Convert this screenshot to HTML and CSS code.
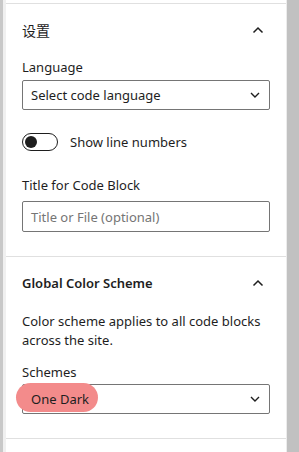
FILE: index.html
```html
<!DOCTYPE html>
<html lang="en">
<head>
    <meta charset="UTF-8">
    <title>Code Block Settings</title>
    <link rel="stylesheet" href="styles.css">
</head>
<body>
<div class="frame">
    <div class="edge"></div>
    <div class="sidebar">
        <div class="panel">
            <div class="panel-header">
                <span class="panel-title cjk">设置</span>
                <svg class="chevron" width="12" height="8" viewBox="0 0 12 8"><path d="M1.5 6.5 L6 2 L10.5 6.5" fill="none" stroke="#1e1e1e" stroke-width="1.5"/></svg>
            </div>
            <div class="panel-body">
                <div class="field-label">Language</div>
                <div class="select">
                    <span>Select code language</span>
                    <svg width="10" height="6" viewBox="0 0 10 6"><path d="M1 1 L5 5 L9 1" fill="none" stroke="#1e1e1e" stroke-width="1.4"/></svg>
                </div>

                <div class="toggle-row">
                    <span class="toggle"><span class="knob"></span></span>
                    <span>Show line numbers</span>
                </div>

                <div class="field-label title-label">Title for Code Block</div>
                <div class="input">Title or File (optional)</div>
            </div>
        </div>

        <div class="panel">
            <div class="panel-header second">
                <span class="panel-title strong">Global Color Scheme</span>
                <svg class="chevron" width="12" height="8" viewBox="0 0 12 8"><path d="M1.5 6.5 L6 2 L10.5 6.5" fill="none" stroke="#1e1e1e" stroke-width="1.5"/></svg>
            </div>
            <div class="panel-body">
                <p class="help">Color scheme applies to all code blocks across the site.</p>
                <div class="field-label scheme-label">Schemes</div>
                <div class="select scheme">
                    <span class="marker"></span>
                    <span class="value">One Dark</span>
                    <svg width="10" height="6" viewBox="0 0 10 6"><path d="M1 1 L5 5 L9 1" fill="none" stroke="#1e1e1e" stroke-width="1.4"/></svg>
                </div>
            </div>
        </div>
        <div class="panel last"></div>
    </div>
    <div class="scrollbar"></div>
</div>
</body>
</html>
```

FILE: styles.css
```css
body {
    margin: 0;
    background: #fff;
    font-family: "Noto Sans", "Noto Sans CJK SC", sans-serif;
    font-size: 13px;
    color: #1e1e1e;
}

.frame {
    display: flex;
    height: 452px;
    overflow: hidden;
}

.edge {
    width: 3px;
    background: #c8c8c8;
    border-right: 3px solid #f0f0f0;
}

.sidebar {
    flex: 1;
    padding-top: 3px;
    border-right: 1px solid #ececec;
}

.scrollbar {
    width: 12px;
    background: #c1c1c1;
}

.panel {
    border-top: 1px solid #e0e0e0;
}

.panel-header {
    height: 52px;
    padding: 0 22px 0 16px;
    display: flex;
    align-items: center;
    justify-content: space-between;
}

.panel-header.second {
    height: 52px;
}

.panel-title {
    font-size: 13px;
}

.panel-title.cjk {
    font-size: 14px;
}

.panel-title.strong {
    font-weight: 600;
}

.panel-body {
    padding: 0 16px 24px 16px;
}

.field-label {
    line-height: 16px;
    margin-top: 3px;
    margin-bottom: 5px;
}

.title-label {
    margin-top: 26px;
    margin-bottom: 8px;
}

.select {
    position: relative;
    height: 28px;
    border: 1px solid #757575;
    border-radius: 2px;
    display: flex;
    align-items: center;
    justify-content: space-between;
    padding: 0 9px 0 8px;
}

.toggle-row {
    display: flex;
    align-items: center;
    gap: 12px;
    margin-top: 23px;
    height: 18px;
}

.toggle {
    width: 34px;
    height: 16px;
    border: 1px solid #1e1e1e;
    border-radius: 9px;
    position: relative;
}

.knob {
    position: absolute;
    left: 2px;
    top: 2px;
    width: 12px;
    height: 12px;
    border-radius: 50%;
    background: #1e1e1e;
}

.input {
    height: 29px;
    border: 1px solid #757575;
    border-radius: 2px;
    padding: 0 8px;
    display: flex;
    align-items: center;
    color: #757575;
}

.help {
    margin: 3px 0 0 0;
    line-height: 19px;
}

.scheme-label {
    margin-top: 14px;
    margin-bottom: 4px;
}

.scheme .marker {
    position: absolute;
    left: -7px;
    top: -2px;
    width: 82px;
    height: 29px;
    border-radius: 15px;
    background: #f38b8b;
}

.scheme .value {
    position: relative;
}

.panel.last {
    height: 20px;
}
```
